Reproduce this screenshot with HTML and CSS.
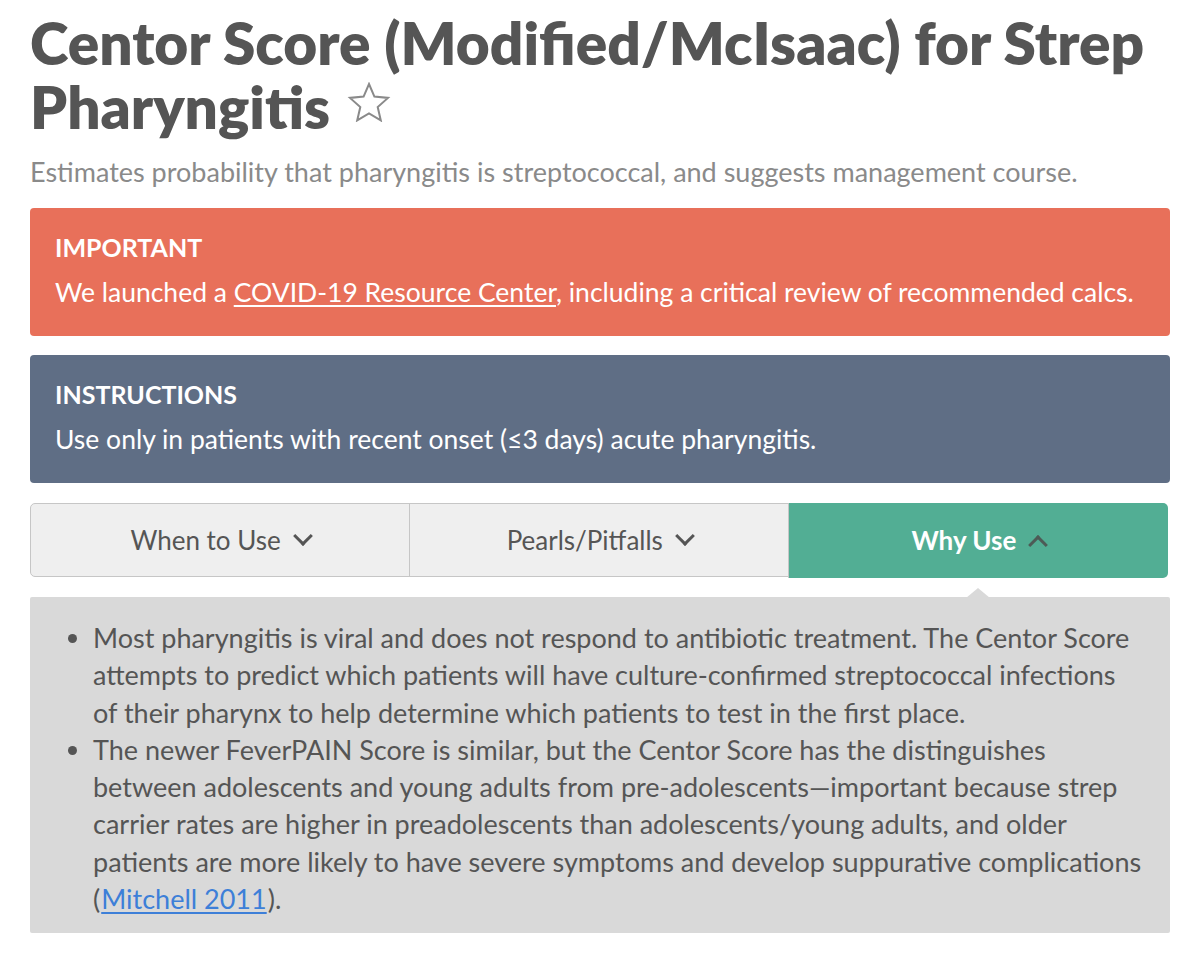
FILE: index.html
```html
<!DOCTYPE html>
<html lang="en">
<head>
<meta charset="utf-8">
<title>Centor Score (Modified/McIsaac) for Strep Pharyngitis</title>
<link rel="stylesheet" href="styles.css">
</head>
<body>
<main class="page">
  <h1 class="calc-title">Centor Score (Modified/McIsaac) for Strep Pharyngitis<span class="fav"><svg viewBox="0 0 44 40" width="44" height="40" aria-hidden="true"><polygon points="22,2 27.4,14.6 41,15.9 30.7,25 33.8,38.4 22,31.4 10.2,38.4 13.3,25 3,15.9 16.6,14.6" fill="none" stroke="#8a8a8a" stroke-width="2" stroke-linejoin="miter"/></svg></span></h1>
  <p class="calc-desc">Estimates probability that pharyngitis is streptococcal, and suggests management course.</p>

  <section class="notice notice-important">
    <h2 class="notice-head">IMPORTANT</h2>
    <p class="notice-text">We launched a <a href="#" class="notice-link">COVID-19 Resource Center</a>, including a critical review of recommended calcs.</p>
  </section>

  <section class="notice notice-instructions">
    <h2 class="notice-head">INSTRUCTIONS</h2>
    <p class="notice-text">Use only in patients with recent onset (≤3 days) acute pharyngitis.</p>
  </section>

  <nav class="tabs">
    <div class="tab">When to Use <span class="chev chev-down"></span></div>
    <div class="tab">Pearls/Pitfalls <span class="chev chev-down"></span></div>
    <div class="tab tab-active">Why Use <span class="chev chev-up"></span></div>
  </nav>

  <div class="panel">
    <ul class="panel-list">
      <li>Most pharyngitis is viral and does not respond to antibiotic treatment. The Centor Score attempts to predict which patients will have culture-confirmed streptococcal infections of their pharynx to help determine which patients to test in the first place.</li>
      <li>The newer FeverPAIN Score is similar, but the Centor Score has the distinguishes between adolescents and young adults from pre-adolescents—important because strep carrier rates are higher in preadolescents than adolescents/young adults, and older patients are more likely to have severe symptoms and develop suppurative complications (<a href="#" class="ref-link">Mitchell 2011</a>).</li>
    </ul>
  </div>
</main>
</body>
</html>
```
FILE: styles.css
```css
* { box-sizing: border-box; }

html, body {
  margin: 0;
  padding: 0;
  background: #ffffff;
}

body {
  font-family: "Lato", "Open Sans", sans-serif;
  color: #555555;
}

.page {
  width: 1140px;
  margin-left: 30px;
  padding-top: 10px;
}

.calc-title {
  margin: 0;
  font-size: 58.5px;
  line-height: 64px;
  font-weight: 800;
  color: #555555;
}

.fav {
  display: inline-block;
  margin-left: 17px;
  vertical-align: 7px;
  line-height: 0;
}

.calc-desc {
  margin: 16px 0 0;
  font-size: 27px;
  line-height: 36px;
  color: #8a8a8a;
}

.notice {
  margin-top: 18px;
  padding: 21px 25px 25px;
  border-radius: 4px;
  color: #ffffff;
  height: 128px;
}

.notice + .notice { margin-top: 19px; }

.notice-important { background: #e8705a; }
.notice-instructions { background: #5f6e85; }

.notice-head {
  margin: 0;
  font-size: 25px;
  line-height: 36px;
  font-weight: 700;
}

.notice-text {
  margin: 9px 0 0;
  font-size: 26.5px;
  line-height: 36px;
}

.notice-link {
  color: #ffffff;
  text-decoration: underline;
  text-underline-offset: 3px;
  text-decoration-thickness: 1.5px;
}

.tabs {
  display: flex;
  margin-top: 20px;
  margin-right: 3px;
  height: 74px;
  border: 1.5px solid #c6c6c6;
  border-radius: 5px;
  background: #efefef;
  position: relative;
}

.tab {
  flex: 1;
  display: flex;
  align-items: center;
  justify-content: center;
  font-size: 26px;
  color: #555555;
}

.tab + .tab { border-left: 1.5px solid #c6c6c6; }

.tab-active {
  background: #52ae94;
  color: #ffffff;
  font-weight: 700;
  margin: -1.5px -1.5px -1.5px 0;
  border-radius: 0 5px 5px 0;
  position: relative;
}

.tab-active::after {
  content: "";
  position: absolute;
  left: 50%;
  bottom: -20px;
  margin-left: -12px;
  border-left: 12px solid transparent;
  border-right: 12px solid transparent;
  border-bottom: 10px solid #d9d9d9;
}

.chev {
  display: inline-block;
  width: 14px;
  height: 14px;
  margin-left: 15px;
  border-right: 3.5px solid #555555;
  border-bottom: 3.5px solid #555555;
}

.chev-down {
  transform: rotate(45deg);
  margin-top: -8px;
}

.chev-up {
  transform: rotate(-135deg);
  margin-top: 10px;
  border-color: #4d5b56;
}

.panel {
  margin-top: 20px;
  padding: 22px 24px 16px 33px;
  background: #d9d9d9;
  border-radius: 2px;
}

.panel-list {
  margin: 0;
  padding-left: 30px;
  font-size: 27px;
  line-height: 37.3px;
  color: #555555;
}

.ref-link {
  color: #3d7fd8;
  text-decoration: underline;
  text-underline-offset: 3px;
  padding: 0 1px;
}
```
